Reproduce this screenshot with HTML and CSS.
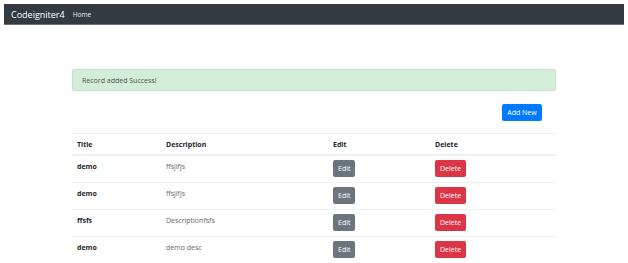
FILE: index.html
```html
<!DOCTYPE html>
<html lang="en">
<head>
  <meta charset="UTF-8" />
  <meta name="viewport" content="width=device-width, initial-scale=1.0"/>
  <title>Codeigniter4</title>
  <link rel="stylesheet" href="styles.css">
</head>
<body>

  <nav class="navbar">
    <a class="brand" href="#">Codeigniter4</a>
    <a class="nav-link" href="#">Home</a>
  </nav>

  <div class="container">
    <div class="alert">Record added Success!</div>

    <div class="toolbar">
      <a class="btn btn-primary" href="#">Add New</a>
    </div>

    <table class="table">
      <colgroup>
        <col class="col-title">
        <col class="col-desc">
        <col class="col-edit">
        <col>
      </colgroup>
      <thead>
        <tr>
          <th>Title</th>
          <th>Description</th>
          <th>Edit</th>
          <th>Delete</th>
        </tr>
      </thead>
      <tbody>
        <tr>
          <td class="title">demo</td>
          <td>ffsjlfjs</td>
          <td class="action"><a class="btn btn-secondary" href="#">Edit</a></td>
          <td class="action"><a class="btn btn-danger" href="#">Delete</a></td>
        </tr>
        <tr>
          <td class="title">demo</td>
          <td>ffsjlfjs</td>
          <td class="action"><a class="btn btn-secondary" href="#">Edit</a></td>
          <td class="action"><a class="btn btn-danger" href="#">Delete</a></td>
        </tr>
        <tr>
          <td class="title">ffsfs</td>
          <td>Descriptionfsfs</td>
          <td class="action"><a class="btn btn-secondary" href="#">Edit</a></td>
          <td class="action"><a class="btn btn-danger" href="#">Delete</a></td>
        </tr>
        <tr>
          <td class="title">demo</td>
          <td>demo desc</td>
          <td class="action"><a class="btn btn-secondary" href="#">Edit</a></td>
          <td class="action"><a class="btn btn-danger" href="#">Delete</a></td>
        </tr>
      </tbody>
    </table>
  </div>

</body>
</html>
```

FILE: styles.css
```css
body {
  margin: 4px;
  font-family: "Open Sans", "Noto Sans", sans-serif;
  color: #212529;
  background-color: #fff;
}

a {
  text-decoration: none;
}

.navbar {
  display: flex;
  align-items: center;
  height: 20px;
  padding: 0 7px;
  background-color: #343a40;
  border-bottom: 1px solid #6c7178;
}

.brand {
  color: #fff;
  font-size: 9px;
  margin-right: 8px;
}

.nav-link {
  color: #e9ecef;
  font-size: 6.5px;
}

.container {
  width: 484px;
  margin: 44px auto 0;
}

.alert {
  height: 22px;
  line-height: 22px;
  padding: 0 9px;
  font-size: 7px;
  color: #44574a;
  background-color: #d4edda;
  border: 1px solid #c3e6cb;
  border-radius: 2px;
  box-sizing: border-box;
}

.toolbar {
  display: flex;
  justify-content: flex-end;
  padding-right: 14px;
  margin-top: 13px;
}

.btn {
  display: inline-block;
  height: 17px;
  line-height: 17px;
  padding: 0 5px;
  font-size: 7px;
  color: #fff;
  border-radius: 2px;
}

.btn-primary {
  width: 40px;
  padding: 0;
  text-align: center;
  background-color: #007bff;
}

.btn-secondary {
  background-color: #6c757d;
}

.btn-danger {
  background-color: #dc3545;
}

.table {
  width: 100%;
  margin-top: 12px;
  border-collapse: collapse;
  font-size: 7px;
}

.col-title {
  width: 89px;
}

.col-desc {
  width: 167px;
}

.col-edit {
  width: 102px;
}

.table th {
  height: 20px;
  padding: 0 5px;
  text-align: left;
  font-weight: 700;
  border-top: 1px solid #eef0f2;
  border-bottom: 2px solid #eef0f2;
}

.table td {
  height: 27px;
  padding: 6px 5px 0 5px;
  vertical-align: top;
  color: #666;
  border-top: 1px solid #eef0f2;
  box-sizing: border-box;
}

.table td.action {
  padding-top: 4px;
}

.table td.title {
  color: #212529;
  font-weight: 700;
}
```
